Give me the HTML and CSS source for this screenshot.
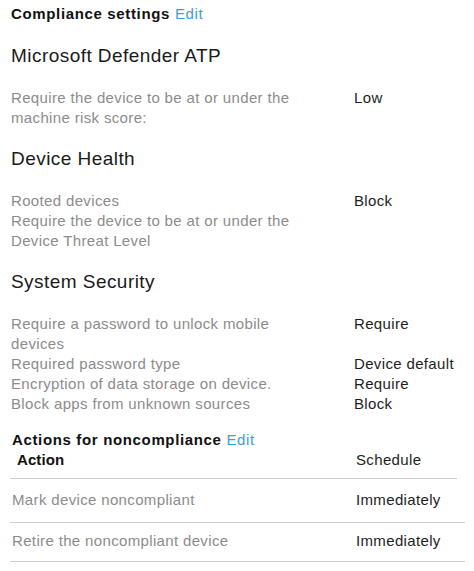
FILE: index.html
```html
<!DOCTYPE html>
<html>
<head>
<meta charset="utf-8">
<link rel="stylesheet" href="styles.css">
</head>
<body>
<div class="page">
  <div class="title"><span class="strong">Compliance settings</span> <span class="edit">Edit</span></div>

  <h2 class="heading first">Microsoft Defender ATP</h2>
  <div class="settings">
    <div class="label">Require the device to be at or under the machine risk score:</div>
    <div class="value">Low</div>
  </div>

  <h2 class="heading">Device Health</h2>
  <div class="settings">
    <div class="label">Rooted devices<br>Require the device to be at or under the Device Threat Level</div>
    <div class="value">Block</div>
  </div>

  <h2 class="heading">System Security</h2>
  <div class="settings">
    <div class="label">Require a password to unlock mobile devices</div>
    <div class="value">Require</div>
    <div class="label">Required password type</div>
    <div class="value">Device default</div>
    <div class="label">Encryption of data storage on device.</div>
    <div class="value">Require</div>
    <div class="label">Block apps from unknown sources</div>
    <div class="value">Block</div>
  </div>

  <div class="title actions-title"><span class="strong">Actions for noncompliance</span> <span class="edit">Edit</span></div>
  <div class="actions">
    <div class="arow head">
      <div class="acol strong indent">Action</div>
      <div class="acol sched">Schedule</div>
    </div>
    <div class="arow r1">
      <div class="acol label">Mark device noncompliant</div>
      <div class="acol sched">Immediately</div>
    </div>
    <div class="arow r2">
      <div class="acol label">Retire the noncompliant device</div>
      <div class="acol sched">Immediately</div>
    </div>
  </div>
</div>
</body>
</html>
```

FILE: styles.css
```css
html, body {
  margin: 0;
  padding: 0;
  background: #ffffff;
}

body {
  font-family: "Liberation Sans", Arial, sans-serif;
  color: #1e1e1e;
}

.page {
  width: 474px;
  height: 571px;
  padding: 4px 0 0 11px;
  box-sizing: border-box;
  overflow: hidden;
}

.title {
  font-size: 15px;
  letter-spacing: 0.65px;
  line-height: 20px;
}

.strong {
  font-weight: bold;
  color: #111111;
}

.edit {
  color: #3a9fd6;
  font-weight: normal;
}

.heading {
  margin: 19px 0 0 0;
  font-size: 19px;
  letter-spacing: 0.45px;
  font-weight: normal;
  line-height: 24px;
  color: #1a1a1a;
}

.heading.first {
  margin-top: 20px;
}

.settings {
  display: grid;
  grid-template-columns: 343px auto;
  margin-top: 20px;
  font-size: 15px;
  letter-spacing: 0.35px;
  line-height: 20px;
}

.label {
  color: #8c8c8c;
  padding-right: 40px;
}

.value {
  color: #1e1e1e;
}

.actions-title {
  margin-top: 16px;
  margin-left: 1px;
}

.actions {
  margin-left: -1px;
  font-size: 15px;
  letter-spacing: 0.35px;
  line-height: 20px;
}

.arow {
  display: flex;
  border-bottom: 1px solid #cfcfcf;
  width: 455px;
}

.arow.head {
  width: 447px;
  padding-bottom: 8px;
}

.arow.head .strong {
  letter-spacing: 0.1px;
}

.arow.r1 {
  padding: 11px 0 12px 0;
}

.arow.r2 {
  padding: 8px 0 10px 0;
}

.acol {
  padding-left: 2px;
}

.acol.label {
  width: 342px;
  padding-right: 0;
}

.indent {
  padding-left: 7px;
  width: 337px;
}

.sched {
  color: #1e1e1e;
}
```
